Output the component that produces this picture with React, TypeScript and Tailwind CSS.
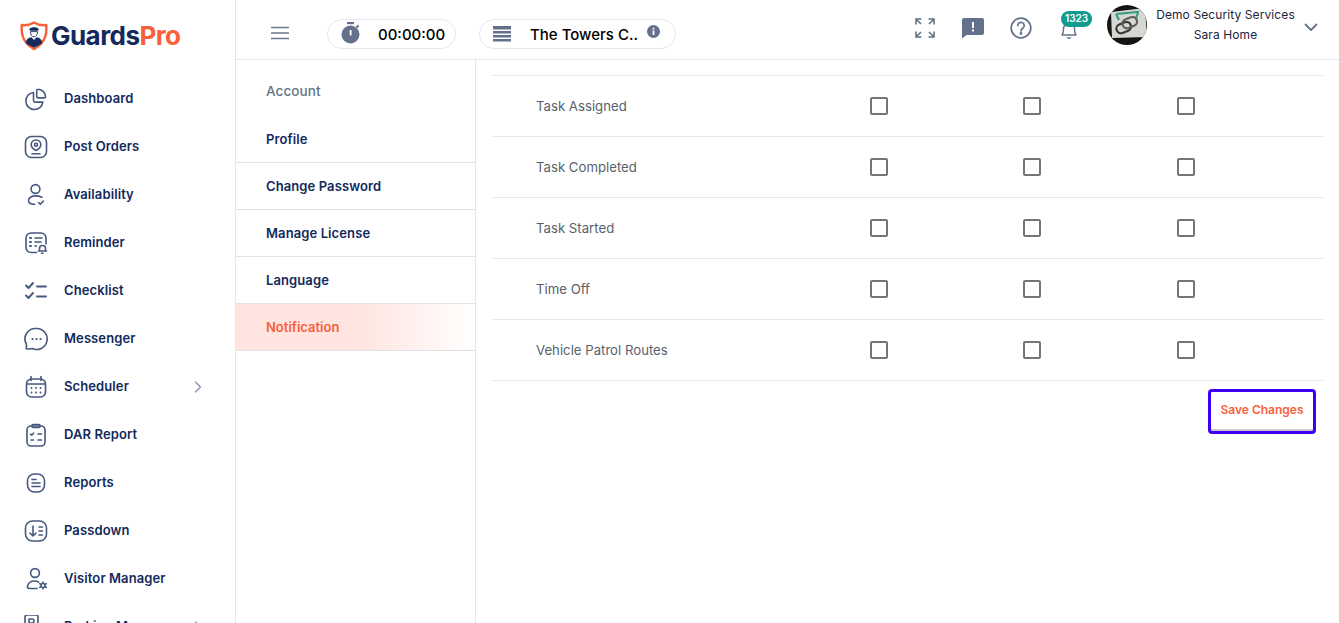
import React from "react";

const S = { fill: "none", stroke: "#46587f", strokeWidth: 1.6, strokeLinecap: "round" as const, strokeLinejoin: "round" as const };

const Ico = ({ children }: { children: React.ReactNode }) => (
  <svg width="24" height="24" viewBox="0 0 24 24" {...S}>{children}</svg>
);

const icons: Record<string, React.ReactNode> = {
  dash: <Ico><path d="M9.500 5.500a8.500 8.500 0 1 0 9.300 9.600h-7.600a1.800 1.800 0 0 1-1.700-1.800z" /><path d="M13.500 2.200a7.800 7.800 0 0 1 8 7.200c0 .9-.5 1.500-1.300 1.500h-5.500a2 2 0 0 1-2-2V3.600c0-.8.200-1.400.8-1.400z" /></Ico>,
  post: <Ico><rect x="1.500" y="1.500" width="21" height="21" rx="6" /><path d="M12 15.500c-3-1.500-4.800-3.300-4.800-5.700a4.800 4.800 0 0 1 9.600 0c0 2.400-1.800 4.200-4.800 5.700z" /><circle cx="12" cy="9.800" r="1.500" /><path d="M8 18.800h8" /></Ico>,
  avail: <Ico><circle cx="11.500" cy="6" r="4.400" /><path d="M18 14.200c-2-.9-4.300-1.300-6.500-1.300-4 0-7 2-7 4.600 0 2.300 2.500 3.800 6 3.900" /><path d="M14.500 19.500l1.800 1.800 3.200-3.300" /></Ico>,
  rem: <Ico><path d="M12.500 21.500H7a5 5 0 0 1-5-5V7a5 5 0 0 1 5-5h10a5 5 0 0 1 5 5v6" /><path d="M11 7h7M11 11h6M11 15h1.500" /><path d="M6 7h1M6 11h1M6 15h1" strokeWidth="2" /><path d="M15.500 20v-2.500a3 3 0 0 1 6 0V20zM14.500 20h8M17.500 22.300h1.500" /></Ico>,
  check: <Ico><path d="M2 6.500l2.500 2.500 4.500-5M2 16.500l2.500 2.500 4.500-5" strokeWidth="1.900" /><path d="M13 7.500h9M13 17.500h9" strokeWidth="1.900" /></Ico>,
  msg: <Ico><path d="M12.500 1.500a10.500 10.500 0 1 1-4.300 20c-1.600.4-3.500.6-5.200.5-.8 0-1-.5-.8-1.200.3-1.200.5-2.500.2-3.600A10.500 10.500 0 0 1 12.500 1.500z" /><path d="M8.500 12h.1M12.500 12h.1M16.500 12h.1" strokeWidth="2.200" /></Ico>,
  sched: <Ico><rect x="2.500" y="4" width="19" height="18" rx="5" /><path d="M7 1.500v4M17 1.500v4M3 9h18" /><path d="M7.500 13h.1M12 13h.1M16.500 13h.1M7.500 17.500h.1M12 17.500h.1M16.500 17.500h.1" strokeWidth="1.800" /></Ico>,
  dar: <Ico><rect x="3" y="3" width="18" height="20" rx="4" /><path d="M8 3.500V2.500c0-.6.400-1 1-1h6c.6 0 1 .4 1 1v1c0 .6-.4 1-1 1H9c-.6 0-1-.4-1-1z" /><path d="M6.500 11l1.200 1.200 2-2.200M14 11h3.500M7 17h2.500M14 17h3.500" /></Ico>,
  rep: <Ico><rect x="3.500" y="3" width="17" height="18" rx="7" /><path d="M8 8.500h4M8 12h8M8 15.500h8" /></Ico>,
  pass: <Ico><rect x="1.500" y="2" width="21" height="20" rx="7" /><path d="M9 7v10M6 14l3 3 3-3" /><path d="M15 8h3.500M15 12h3.500M15 16h3.500" /></Ico>,
  vis: <Ico><circle cx="11" cy="6" r="4.400" /><path d="M13 21.500H5.500c-1.500 0-2.500-1-2-2.500.8-3 3.500-5 7-5 1.500 0 3 .4 4 1" /><circle cx="19" cy="18.500" r="2" /><path d="M19 15v1M19 21v1M15.800 16.700l.9.500M21.300 19.800l.9.500M15.800 20.300l.9-.5M21.300 17.200l.9-.5" /></Ico>,
  park: <Ico><rect x="1" y="0" width="13" height="15" rx="2" /><path d="M5 11V4h3a2 2 0 0 1 0 4H5" /><path d="M16 11h6" /></Ico>,
};

const nav = [
  ["dash", "Dashboard"], ["post", "Post Orders"], ["avail", "Availability"], ["rem", "Reminder"],
  ["check", "Checklist"], ["msg", "Messenger"], ["sched", "Scheduler", 1], ["dar", "DAR Report"],
  ["rep", "Reports"], ["pass", "Passdown"], ["vis", "Visitor Manager"], ["park", "Parking Manager", 1],
] as [string, string, number?][];

const sub = ["Profile", "Change Password", "Manage License", "Language"];
const rows = ["Task Assigned", "Task Completed", "Task Started", "Time Off", "Vehicle Patrol Routes"];

const Chevron = () => (
  <svg width="10" height="14" viewBox="0 0 10 14" fill="none" stroke="#8a94a8" strokeWidth="1.300" strokeLinecap="round" strokeLinejoin="round"><path d="M2.500 2l5 5-5 5" /></svg>
);

const Shield = () => (
  <svg width="28" height="30" viewBox="0 0 32 34">
    <path d="M16 1.500c4 2.500 9 3.500 14 3 .6 9 .3 19.500-14 27.500C2 24 1.400 13.500 2 4.500c5 .5 10-.5 14-3z" fill="#fff" stroke="#f4633a" strokeWidth="2.800" strokeLinejoin="round" />
    <path d="M10.500 9c2.500-2.800 8.500-2.800 11 0l-1 2h-9z" fill="#14295c" />
    <path d="M12 12h8c0 3.500-1.500 6-4 6s-4-2.500-4-6z" fill="#fff" stroke="#14295c" strokeWidth="1" />
    <path d="M6.500 25c.3-4 3-6 6.500-6.500l3 3 3-3c3.500.5 6.200 2.500 6.500 6.500-2.500 2.300-6 3.500-9.500 5.300-3.500-1.800-7-3-9.500-5.300z" fill="#14295c" />
  </svg>
);

const Avatar = () => (
  <svg width="40" height="40" viewBox="0 0 40 40" className="shrink-0">
    <defs><clipPath id="av"><circle cx="20" cy="20" r="20" /></clipPath></defs>
    <g clipPath="url(#av)">
      <rect width="40" height="40" fill="#141413" />
      <path d="M4 7L38 3l2 29-35 1z" fill="#d5d7d1" />
      <path d="M9 9l22-2-2 7M9 9l3 6" fill="none" stroke="#3b9c86" strokeWidth="2.200" />
      <g fill="none" strokeWidth="2.200">
        <rect x="9" y="18" width="15" height="9" rx="4.500" transform="rotate(-22 17 22)" stroke="#383836" />
        <rect x="15" y="13" width="15" height="9" rx="4.500" transform="rotate(-22 23 17)" stroke="#5c5f5b" />
      </g>
    </g>
  </svg>
);

export default function App() {
  return (
    <div className="flex h-[623px] w-[1339px] overflow-hidden bg-white font-['Inter',sans-serif]">
      <aside className="w-[236px] shrink-0 border-r border-[#e2e8f0] overflow-hidden">
        <div className="flex h-[75px] items-start pl-[20px] pt-[21px]">
          <Shield />
          <span className="ml-[3px] mt-[-1px] text-[26px] font-bold leading-[32px] tracking-[-0.550px] text-[#14295c]">Guards<span className="text-[#f8603a]">Pro</span></span>
        </div>
        {nav.map(([ic, label, more]) => (
          <div key={label} className="flex h-12 items-center pl-6 pr-[32px]">
            <span className="shrink-0">{icons[ic]}</span>
            <span className="ml-4 flex-1 text-[13px] font-semibold tracking-[0.100px] text-[#12295c]">{label}</span>
            {more ? <Chevron /> : null}
          </div>
        ))}
      </aside>

      <div className="flex min-w-0 flex-1 flex-col">
        <header className="flex h-[60px] shrink-0 items-center border-b border-[#e2e8f0] pl-[35px]">
          <div className="flex items-center pt-[9px]">
            <svg width="18" height="14" viewBox="0 0 18 14" stroke="#6b7890" strokeWidth="1.500" className="mt-[-3px]"><path d="M0 1.500h18M0 7h18M0 12.500h18" /></svg>
            <div className="ml-[38px] flex h-[30px] w-[129px] items-center rounded-full border border-[#e2e8f0] pl-[13px]">
              <svg width="19" height="22" viewBox="0 0 19 22" fill="#64718c" className="mt-[-2px]"><rect x="6" y="0" width="7" height="2.200" /><circle cx="9.500" cy="12.500" r="9" /><rect x="8.700" y="8" width="1.800" height="5.500" fill="#fff" /><rect x="15.500" y="3" width="2" height="3" transform="rotate(45 16.500 4.500)" /></svg>
              <span className="ml-[18px] pt-[2px] text-[15px] font-medium text-black">00:00:00</span>
            </div>
            <div className="ml-[23px] flex h-[30px] w-[197px] items-center rounded-full border border-[#e2e8f0] pl-[13px]">
              <svg width="18" height="16" viewBox="0 0 18 16" fill="#64718c"><rect width="18" height="3.500" /><rect y="5" width="18" height="2.500" /><rect y="9" width="18" height="2.500" /><rect y="13" width="18" height="2.500" /></svg>
              <span className="ml-[19px] pt-[2px] text-[15px] font-medium text-black">The Towers C..</span>
              <svg width="13" height="13" viewBox="0 0 13 13" className="ml-[9px] mt-[-5px]"><circle cx="6.500" cy="6.500" r="6.500" fill="#64718c" /><rect x="5.600" y="5.500" width="1.800" height="4.500" fill="#fff" /><rect x="5.600" y="2.800" width="1.800" height="1.700" fill="#fff" /></svg>
            </div>
          </div>

          <div className="ml-auto flex items-center pr-[21px]">
            <svg width="20" height="20" viewBox="0 0 20 20" fill="none" stroke="#64718c" strokeWidth="1.600" className="mt-[-3px]"><path d="M1 6.500V1h5.500M1 1l5 5M19 6.500V1h-5.500M19 1l-5 5M1 13.500V19h5.500M1 19l5-5M19 13.500V19h-5.500M19 19l-5-5" /></svg>
            <svg width="22" height="21" viewBox="0 0 22 21" className="ml-[27px] mt-[-3px]"><path d="M2 0h18a2 2 0 0 1 2 2v13a2 2 0 0 1-2 2H4.500L0 20.500V2a2 2 0 0 1 2-2z" fill="#64718c" /><rect x="10" y="4" width="2" height="6" fill="#fff" /><rect x="10" y="11.500" width="2" height="2" fill="#fff" /></svg>
            <svg width="22" height="22" viewBox="0 0 22 22" fill="none" stroke="#64718c" strokeWidth="1.700" className="ml-[26px] mt-[-3px]"><circle cx="11" cy="11" r="9.800" /><path d="M7.800 8.500a3.200 3.200 0 1 1 5 2.700c-1.200.8-1.800 1.300-1.800 2.800" strokeLinecap="round" /><circle cx="11" cy="16.500" r=".6" fill="#64718c" /></svg>
            <div className="relative ml-[27px] h-5 w-5">
              <svg width="20" height="20" viewBox="0 0 20 20" fill="none" stroke="#64718c" strokeWidth="1.400"><path d="M3 15c1.200-1.500 1.500-3 1.500-6a5.500 5.500 0 0 1 11 0c0 3 .3 4.500 1.500 6zM8 17.500c.5 1 3.500 1 4 0" strokeLinejoin="round" /></svg>
              <span className="absolute left-[2px] top-[-9px] flex h-4 w-[31px] items-center justify-center rounded-full bg-[#0f9b8e] text-[10px] font-semibold text-white">1323</span>
            </div>
            <div className="ml-[28px] mt-[-10px]"><Avatar /></div>
            <div className="ml-[10px] mt-[-9px] flex w-[137px] flex-col items-center text-[12px] leading-[20px] tracking-[0.100px] text-[#1c2440]">
              <span className="whitespace-nowrap">Demo Security Services</span>
              <span>Sara Home</span>
            </div>
            <svg width="14" height="9" viewBox="0 0 14 9" fill="none" stroke="#64718c" strokeWidth="1.800" strokeLinecap="round" strokeLinejoin="round" className="ml-[10px] mt-[-4px]"><path d="M1.500 1.500L7 7l5.500-5.500" /></svg>
          </div>
        </header>

        <div className="flex min-h-0 flex-1">
          <nav className="w-[240px] shrink-0 border-r border-[#e2e8f0]">
            <div className="flex h-[56px] items-start pl-[30px] pt-[22px] text-[13.500px] font-medium leading-[18px] tracking-[0.100px] text-[#64748b]">Account</div>
            {sub.map((s) => (
              <div key={s} className="flex h-[47px] items-center border-b border-[#e2e2e6] pl-[30px] pt-[2px] text-[13px] font-semibold tracking-[0.100px] text-[#12295c]">{s}</div>
            ))}
            <div className="flex h-[47px] items-center border-b border-[#e2e2e6] bg-gradient-to-r from-[#ffe4e0] via-[#ffe4e0] to-white pl-[30px] pt-[2px] text-[13px] font-semibold text-[#f8603a]">Notification</div>
          </nav>

          <main className="min-w-0 flex-1 px-4 pt-[15px]">
            <div className="border-t border-[#e2e8f0]">
              {rows.map((r) => (
                <div key={r} className="grid h-[61px] grid-cols-[310px_153.500px_153.500px_153.500px_1fr] items-center border-b border-[#e2e8f0]">
                  <span className="pt-[1px] pl-[44px] text-[13.200px] text-[#585f6b]">{r}</span>
                  {[0, 1, 2].map((i) => (
                    <span key={i} className="mx-auto block h-[18px] w-[18px] rounded-[2px] border-2 border-[#757575] bg-white" />
                  ))}
                  <span />
                </div>
              ))}
            </div>
            <div className="mr-[7px] mt-2 flex justify-end">
              <button className="flex h-[45px] w-[108px] items-center justify-center rounded-[4px] border-[3px] border-[#3d00f5] bg-white pb-[4px] text-[12px] font-semibold text-[#f8603a] shadow-[inset_0_-2px_0_#c8c8d0]">Save Changes</button>
            </div>
          </main>
        </div>
      </div>
    </div>
  );
}
